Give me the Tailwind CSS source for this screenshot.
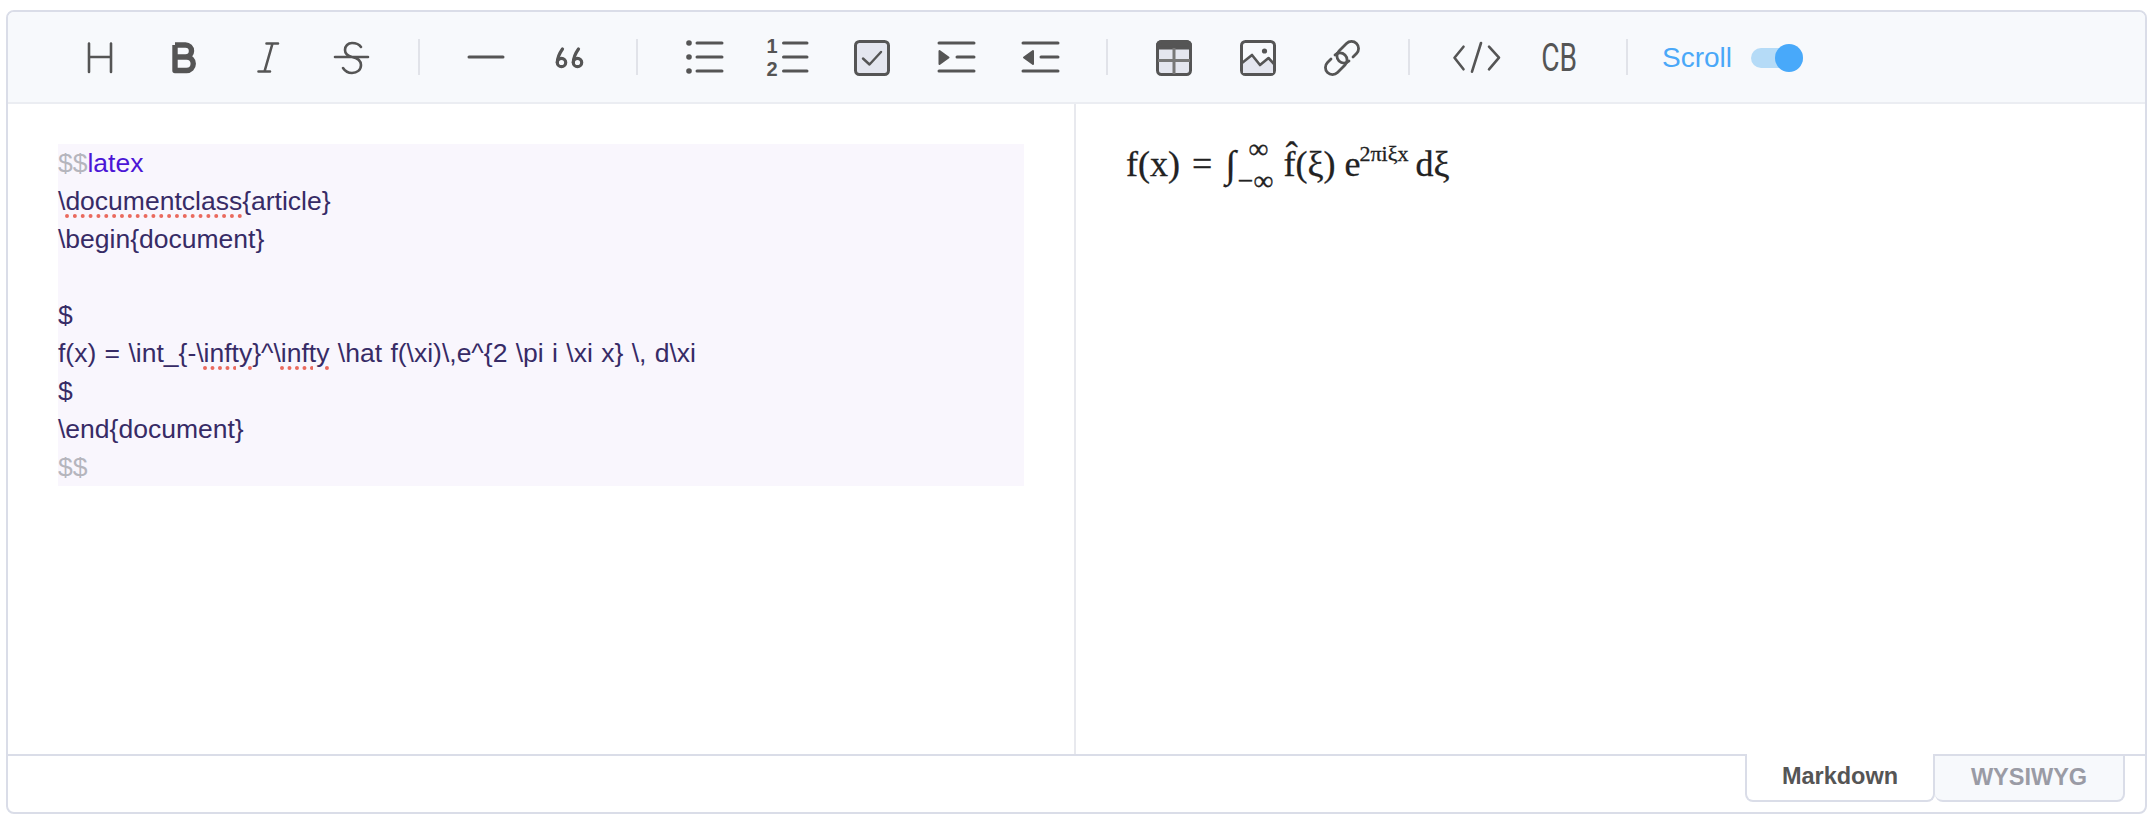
<!DOCTYPE html>
<html lang="en">
<head>
    <meta charset="UTF-8">
    <title>Markdown editor</title>
    <script src="https://cdn.jsdelivr.net/npm/@tailwindcss/browser@4"></script>
</head>
<body class="bg-white font-['Liberation_Sans',Arial,sans-serif]">
    <div class="ml-[6px] mt-[10px] w-[2141px] h-[804px] border-2 border-[#dadde8] rounded-[8px] flex flex-col overflow-hidden">

        <!-- Toolbar -->
        <div class="h-[92px] shrink-0 bg-[#f7f9fc] border-b-2 border-[#ebedf2] flex items-center pl-[50px] text-[#555555]">
            <div class="w-[84px] flex justify-center">
                <svg class="size-11" viewBox="0 0 44 44" fill="none" stroke="#555555" stroke-width="2.6" stroke-linecap="round"><path d="M11 8.5V37M33 8.5V37M11 22H33"/></svg>
            </div>
            <div class="w-[84px] flex justify-center">
                <svg class="size-11" viewBox="0 0 44 44" fill="none" stroke="#555555" stroke-width="5.4" stroke-linejoin="round"><path d="M13 10V35.5H24.5a6.7 6.7 0 0 0 0-13.5H13M13 22H23.5a6 6 0 0 0 0-12H13"/></svg>
            </div>
            <div class="w-[84px] flex justify-center">
                <svg class="size-11" viewBox="0 0 44 44" fill="none" stroke="#555555" stroke-width="2.6" stroke-linecap="round"><path d="M20.5 8.5H32M12.5 36.5H24M26.5 8.5L18.5 36.5"/></svg>
            </div>
            <div class="w-[84px] flex justify-center">
                <svg class="size-11" viewBox="0 0 44 44" fill="none" stroke="#555555" stroke-width="2.6" stroke-linecap="round"><path d="M31 12C29 9 26 8 22 8C18 8 15 11 15 15C15 19 18 21 22 22C27 23 31 25 31 30C31 35 27 38 22 38C18 38 15 36 13 33M5 22H38"/></svg>
            </div>
            <div class="w-0.5 h-9 mx-6 bg-[#e1e3e9]"></div>
            <div class="w-[84px] flex justify-center">
                <svg class="size-11" viewBox="0 0 44 44" fill="none" stroke="#555555" stroke-width="3" stroke-linecap="round"><path d="M5 22H39"/></svg>
            </div>
            <div class="w-[84px] flex justify-center">
                <svg class="size-11" viewBox="0 0 44 44" fill="none" stroke="#555555" stroke-width="3.2" stroke-linecap="round"><circle cx="13.5" cy="27.5" r="4.2"/><circle cx="29.5" cy="27.5" r="4.2"/><path d="M9.3 27.5Q9.5 21 14.5 14M25.3 27.5Q25.5 21 30.5 14"/></svg>
            </div>
            <div class="w-0.5 h-9 mx-6 bg-[#e1e3e9]"></div>
            <div class="w-[84px] flex justify-center">
                <svg class="size-11" viewBox="0 0 44 44" fill="none" stroke="#555555" stroke-width="3" stroke-linecap="round"><circle cx="7" cy="8" r="2.8" fill="#555555" stroke="none"/><circle cx="7" cy="22" r="2.8" fill="#555555" stroke="none"/><circle cx="7" cy="36" r="2.8" fill="#555555" stroke="none"/><path d="M15 8H40M15 22H40M15 36H40"/></svg>
            </div>
            <div class="w-[84px] flex justify-center">
                <svg class="size-11" viewBox="0 0 44 44" fill="none" stroke="#555555" stroke-width="3" stroke-linecap="round"><path d="M17.5 8H41M17.5 22H41M17.5 36H41"/><text x="6" y="18" text-anchor="middle" font-family="Liberation Sans" font-size="20" font-weight="700" fill="#555555" stroke="none">1</text><text x="6" y="40.5" text-anchor="middle" font-family="Liberation Sans" font-size="20" font-weight="700" fill="#555555" stroke="none">2</text></svg>
            </div>
            <div class="w-[84px] flex justify-center">
                <svg class="size-11" viewBox="0 0 44 44" fill="none" stroke="#555555" stroke-width="3" stroke-linecap="round" stroke-linejoin="round"><rect x="5.5" y="6.5" width="33" height="33" rx="4" fill="#e4e6ef"/><path d="M13 23.5L19.5 29.5L31 17" stroke-width="2.4"/></svg>
            </div>
            <div class="w-[84px] flex justify-center">
                <svg class="size-11" viewBox="0 0 44 44" fill="none" stroke="#555555" stroke-width="3" stroke-linecap="round" stroke-linejoin="round"><path d="M5 8H40M5 36H40M23 22H40"/><path d="M5.5 16V29L14.5 22.5Z" fill="#555555" stroke-width="2"/></svg>
            </div>
            <div class="w-[84px] flex justify-center">
                <svg class="size-11" viewBox="0 0 44 44" fill="none" stroke="#555555" stroke-width="3" stroke-linecap="round" stroke-linejoin="round"><path d="M5 8H40M5 36H40M23 22H40"/><path d="M15 16V29L6 22.5Z" fill="#555555" stroke-width="2"/></svg>
            </div>
            <div class="w-0.5 h-9 mx-6 bg-[#e1e3e9]"></div>
            <div class="w-[84px] flex justify-center">
                <svg class="size-11" viewBox="0 0 44 44" fill="none" stroke="#555555" stroke-width="3" stroke-linejoin="round"><rect x="5.5" y="6.5" width="33" height="33" rx="4" fill="#e4e6ef"/><path d="M5.5 10.5a4 4 0 0 1 4-4h25a4 4 0 0 1 4 4V13H5.5Z" fill="#555555"/><path d="M6 25.5H38M22 13V39" stroke="#777777"/></svg>
            </div>
            <div class="w-[84px] flex justify-center">
                <svg class="size-11" viewBox="0 0 44 44" fill="none" stroke="#555555" stroke-width="3" stroke-linejoin="round"><rect x="5.5" y="6.5" width="33" height="33" rx="4"/><path d="M7 28L16 20L24 30L32.5 23L37 28V38H7Z" fill="#e4e6ef" stroke="none"/><path d="M6 28L16 20L24 30L32.5 23L38 29" stroke-width="2.6"/><circle cx="28.5" cy="16" r="2.6" fill="#555555" stroke="none"/></svg>
            </div>
            <div class="w-[84px] flex justify-center">
                <svg class="size-11 translate-x-[1px]" viewBox="0 0 44 44" fill="none" stroke="#555555" stroke-width="2.8" stroke-linecap="round"><path d="M32 22L35.5 18.5A7.07 7.07 0 0 0 25.5 8.5L18 16A7.07 7.07 0 0 0 28 26"/><path d="M10 24L6.5 27.5A7.07 7.07 0 0 0 16.5 37.5L24 30A7.07 7.07 0 0 0 14 20"/></svg>
            </div>
            <div class="w-0.5 h-9 ml-[24px] mr-[25px] bg-[#e1e3e9]"></div>
            <div class="w-[84px] flex justify-center">
                <svg class="size-11 overflow-visible" viewBox="0 0 44 44" fill="none" stroke="#555555" stroke-width="2.6" stroke-linecap="round" stroke-linejoin="round"><path d="M8.5 11.7L-0.5 22.7L8.5 34.3M26 8L17 36.7M34 11.7L44 22.7L34 34.3"/></svg>
            </div>
            <div class="w-[84px] flex justify-center -translate-x-[2px] translate-y-[1px]">
                <span class="font-['Roboto'] text-[38px] leading-none scale-x-[.74] text-[#555555]">CB</span>
            </div>
            <div class="w-0.5 h-9 ml-[23px] bg-[#e1e3e9]"></div>
            <span class="ml-[34px] text-[28px] leading-none text-[#4aa8f8] translate-y-[1px]">Scroll</span>
            <div class="ml-[19px] w-[52px] h-5 rounded-full bg-[#b5dbf7] flex items-center justify-end translate-y-[1px]">
                <div class="size-7 shrink-0 rounded-full bg-[#48a9fa]"></div>
            </div>
        </div>

        <!-- Panes -->
        <div class="flex-1 flex min-h-0">
            <div class="w-[1068px] shrink-0 border-r-2 border-[#e8e9ee] pl-[50px] pt-[40px]">
                <div class="w-[966px] bg-[#f9f6fd] text-[26.5px] leading-[38px] [word-spacing:1px] text-[#372b66]">
                    <div><span class="text-[#b5b5bd]">$$</span><span class="text-[#4b15d6]">latex</span></div>
                    <div>\<span class="underline decoration-dotted decoration-[#ea6a5e] decoration-[4px] underline-offset-[4px]">documentclass</span>{article}</div>
                    <div>\begin{document}</div>
                    <div class="h-[38px]"></div>
                    <div>$</div>
                    <div>f(x) = \int_{-\<span class="underline decoration-dotted decoration-[#ea6a5e] decoration-[4px] underline-offset-[4px]">infty</span>}^\<span class="underline decoration-dotted decoration-[#ea6a5e] decoration-[4px] underline-offset-[4px]">infty</span> \hat f(\xi)\,e^{2 \pi i \xi x} \, d\xi</div>
                    <div>$</div>
                    <div>\end{document}</div>
                    <div class="text-[#b5b5bd]">$$</div>
                </div>
            </div>
            <div class="flex-1 pl-[50px] pt-[40px] font-['Liberation_Serif',serif] text-[#222222] [-webkit-text-stroke:0.3px]">
                <div class="flex items-center h-[40px] text-[36px] leading-none">
                    <span>f(x)</span>
                    <span class="ml-[12px]">=</span>
                    <span class="ml-[13px] text-[38px]">∫</span>
                    <div class="ml-[2px] flex flex-col items-center text-[28px] leading-[32px] translate-y-[1px]">
                        <span class="ml-[6px]">∞</span>
                        <span>−∞</span>
                    </div>
                    <span class="ml-[10px]">f̂(ξ)</span>
                    <span class="ml-[9px]">e</span>
                    <span class="-ml-[1px] text-[22px] -translate-y-[10px]">2πiξx</span>
                    <span class="ml-[7px]">dξ</span>
                </div>
            </div>
        </div>

        <!-- Mode switch -->
        <div class="h-[58px] shrink-0 border-t-2 border-[#dadde8] flex justify-end pr-[20px]">
            <div class="-mt-[2px] w-[190px] h-[48px] bg-white border-2 border-t-0 border-[#dadde8] rounded-b-[8px] flex items-center justify-center text-[23.5px] font-bold text-[#555555]">Markdown</div>
            <div class="-mt-[2px] w-[190px] h-[48px] bg-[#f7f9fc] border-2 border-l-0 border-[#dadde8] rounded-b-[8px] flex items-center justify-center text-[23.5px] font-bold text-[#9a9ba5]">WYSIWYG</div>
        </div>
    </div>
</body>
</html>
